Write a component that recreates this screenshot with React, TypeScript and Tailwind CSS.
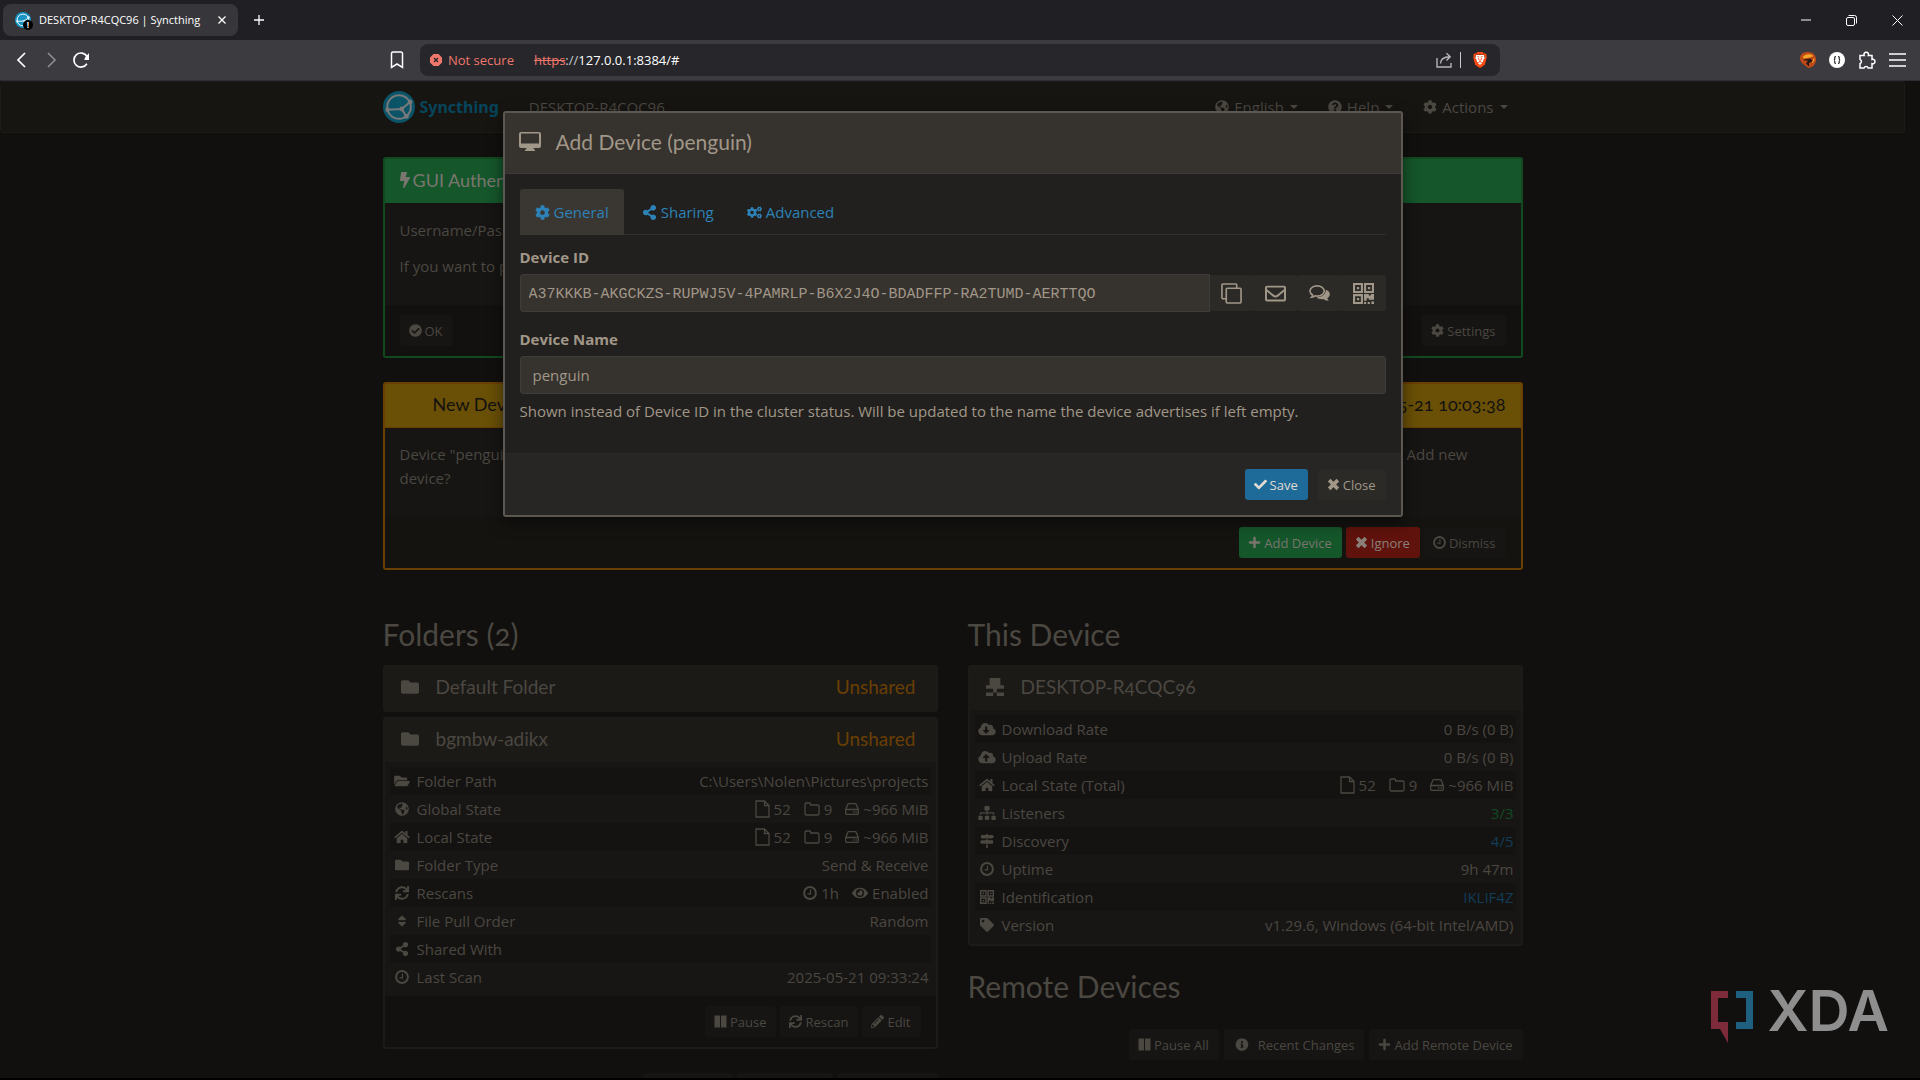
import React from "react";
import clsx from "clsx";
import {
  FaBolt,
  FaCheck,
  FaCheckCircle,
  FaCloudDownloadAlt,
  FaCloudUploadAlt,
  FaCog,
  FaCogs,
  FaEye,
  FaFolder,
  FaFolderOpen,
  FaGlobeAmericas,
  FaHome,
  FaInfoCircle,
  FaMapSigns,
  FaPencilAlt,
  FaPlus,
  FaQuestionCircle,
  FaRegEnvelope,
  FaShareAlt,
  FaSitemap,
  FaSort,
  FaSync,
  FaTag,
} from "react-icons/fa";
import { SiBrave } from "react-icons/si";

type IconType = React.ComponentType<{ className?: string }>;

/* ---------- icons ---------- */

const SyncthingMark = ({ className }: { className?: string }) => (
  <svg viewBox="0 0 32 32" className={className} aria-hidden="true">
    <circle cx="16" cy="16" r="16" fill="currentColor" />
    <g fill="none" stroke="var(--mark)" strokeWidth="2">
      <circle cx="16" cy="16" r="11.8" />
      <path d="M4.5 18.8 18.8 18M18.8 18 27 11M18.8 18 23.3 25.5" />
    </g>
    <g fill="var(--mark)">
      <circle cx="4.6" cy="18.8" r="2.2" />
      <circle cx="18.8" cy="18" r="2.4" />
      <circle cx="27" cy="11" r="2.4" />
      <circle cx="23.4" cy="25.4" r="2.4" />
    </g>
  </svg>
);

const DesktopIcon = ({ className }: { className?: string }) => (
  <svg viewBox="0 0 22 20" className={className} aria-hidden="true">
    <path
      fill="currentColor"
      fillRule="evenodd"
      d="M2 0h18a2 2 0 0 1 2 2v12a2 2 0 0 1-2 2h-5.500l.500 1.500h1V19H6v-1.500h1l.500-1.500H2a2 2 0 0 1-2-2V2a2 2 0 0 1 2-2Zm0 1.500v10h18v-10Z"
    />
  </svg>
);

const CloneIcon = ({ className }: { className?: string }) => (
  <svg viewBox="0 0 22 22" className={className} aria-hidden="true">
    <g fill="none" stroke="currentColor" strokeWidth="1.700">
      <rect x="5.500" y="5.500" width="15.500" height="15.500" rx="1" />
      <path d="M5.500 16.500H2a1 1 0 0 1-1-1V2a1 1 0 0 1 1-1h13.500a1 1 0 0 1 1 1v3.500" />
    </g>
  </svg>
);

const CommentsIcon = ({ className }: { className?: string }) => (
  <svg viewBox="0 0 22 18" className={className} aria-hidden="true">
    <path
      d="M8.500 1C4.400 1 1 3.400 1 6.400c0 1.700 1.100 3.200 2.800 4.200-.1.900-.5 1.600-1.100 2.300 1.400-.2 2.600-.7 3.600-1.500.7.200 1.400.3 2.200.3 4.100 0 7.500-2.400 7.500-5.300S12.600 1 8.500 1Z"
      fill="none"
      stroke="currentColor"
      strokeWidth="1.700"
    />
    <path
      d="M17.600 5.200c.1 5-4.600 8-9.700 8 1.700 1.400 4.600 2.200 7.300 1.600 1.200 1 2.900 1.800 4.900 1.800.4-.1.500-.5.200-.8-.7-.6-1-1.300-1.200-2 1.700-1 2.700-2.400 2.700-4.100 0-1.900-1.600-3.500-4.200-4.500Z"
      fill="currentColor"
    />
  </svg>
);

const QrIcon = ({ className }: { className?: string }) => (
  <svg viewBox="0 0 20 20" className={className} aria-hidden="true">
    <path
      fill="none"
      stroke="currentColor"
      strokeWidth="2"
      d="M1 1h7.500v7.500H1zM11.500 1H19v7.500h-7.500zM1 11.500h7.500V19H1z"
    />
    <path
      fill="currentColor"
      d="M3.700 3.700h2.200v2.200H3.700zM14.200 3.700h2.200v2.200h-2.200zM3.700 14.200h2.200v2.200H3.700zM10.500 10.500h4.500v1.500h2v-1.500h3V16h-5v-1.500h-2v2.500h-2.500zM10.500 18H12.500v2h-2zM14 18h2v2h-2zM17.500 17.500H20V20h-2.500z"
    />
  </svg>
);

const ClockIcon = ({ className }: { className?: string }) => (
  <svg viewBox="0 0 14 14" className={className} aria-hidden="true">
    <circle cx="7" cy="7" r="5.900" fill="none" stroke="currentColor" strokeWidth="2" />
    <path d="M7.500 3.500v4.300h-3" fill="none" stroke="currentColor" strokeWidth="1.200" />
  </svg>
);

const FileIcon = ({ className }: { className?: string }) => (
  <svg viewBox="0 0 15 18" className={className} aria-hidden="true">
    <path
      d="M1 1h8.500L14 5.500V17H1ZM9.500 1v4.500H14"
      fill="none"
      stroke="currentColor"
      strokeWidth="1.300"
    />
  </svg>
);

const FolderOutlineIcon = ({ className }: { className?: string }) => (
  <svg viewBox="0 0 16 14" className={className} aria-hidden="true">
    <path
      d="M1 2.200A1.200 1.200 0 0 1 2.200 1h3.300a1.200 1.200 0 0 1 1.200 1.200V3h7.100A1.200 1.200 0 0 1 15 4.200v7.600a1.200 1.200 0 0 1-1.200 1.200H2.200A1.200 1.200 0 0 1 1 11.800Z"
      fill="none"
      stroke="currentColor"
      strokeWidth="1.300"
    />
  </svg>
);

const DiskIcon = ({ className }: { className?: string }) => (
  <svg viewBox="0 0 14 12" className={className} aria-hidden="true">
    <path
      d="M.700 6.500 2.800 1.300Q3 .700 3.700.700h6.600q.7 0 .9.600L13.300 6.500v4q0 .8-.8.800h-11q-.8 0-.8-.8ZM.700 6.500h12.600"
      fill="none"
      stroke="currentColor"
      strokeWidth="1.300"
    />
    <path d="M8 8.300h1.400v1.400H8zM10.400 8.300h1.400v1.400h-1.400z" fill="currentColor" />
  </svg>
);

const TimesIcon = ({ className }: { className?: string }) => (
  <svg viewBox="0 0 12 12" className={className} aria-hidden="true">
    <path d="m2 2 8 8M10 2l-8 8" stroke="currentColor" strokeWidth="3.400" />
  </svg>
);

const PauseIcon = ({ className }: { className?: string }) => (
  <svg viewBox="0 0 14 14" className={className} aria-hidden="true">
    <path d="M.500.500h6v13h-6zM7.500.500h6v13h-6z" fill="currentColor" />
  </svg>
);

// the 5x5 generated avatar of the local device
const Identicon = ({ className }: { className?: string }) => (
  <svg viewBox="0 0 5 5" className={className} aria-hidden="true">
    <path
      fill="currentColor"
      d="M1 0h3v2h1v1H3v1h2v1H3V4H2v1H0V4h2V3H0V2h1z"
    />
  </svg>
);

const Caret = () => (
  <span className="ml-1.5 inline-block border-x-4 border-t-4 border-x-transparent border-t-current" />
);

/* ---------- browser window ---------- */

const BrowserChrome = () => (
  <header className="shrink-0 font-['Open_Sans',sans-serif] text-white">
    <div className="flex h-10 items-center bg-[#1f1f24] pl-[3px]">
      <div className="flex h-8 w-[235px] items-center rounded-lg bg-[#36363b] pr-2.5 pl-3 text-[11px]">
        <span className="relative mr-2 size-4 shrink-0 text-[#1794c4] [--mark:#e8f6fb]">
          <SyncthingMark className="size-4" />
          <span className="absolute -right-0.5 -bottom-0.5 flex size-[10px] items-center justify-center rounded-full bg-black text-[8px] leading-none font-bold text-white">
            !
          </span>
        </span>
        <span className="flex-1 whitespace-nowrap">DESKTOP-R4CQC96 | Syncthing</span>
        <button aria-label="Close tab" className="p-0.5">
          <svg viewBox="0 0 8 8" className="size-2">
            <path d="m.500.500 7 7M7.500.500l-7 7" stroke="currentColor" strokeWidth="1.300" />
          </svg>
        </button>
      </div>
      <button aria-label="New tab" className="ml-3.5 p-0.5">
        <svg viewBox="0 0 10 10" className="size-2.5">
          <path d="M5 0v10M0 5h10" stroke="currentColor" strokeWidth="1.300" />
        </svg>
      </button>
      <div className="ml-auto flex items-center gap-[35px] pr-[17px]">
        <button aria-label="Minimize">
          <svg viewBox="0 0 10 10" className="size-2.5">
            <path d="M0 5h10" stroke="currentColor" />
          </svg>
        </button>
        <button aria-label="Restore">
          <svg viewBox="0 0 11 11" className="size-[11px]" fill="none" stroke="currentColor">
            <rect x=".500" y="2.500" width="8" height="8" rx="1.500" />
            <path d="M2.500.500h6a2 2 0 0 1 2 2v6" />
          </svg>
        </button>
        <button aria-label="Close">
          <svg viewBox="0 0 11 11" className="size-[11px]">
            <path d="m.500.500 10 10M10.500.500l-10 10" stroke="currentColor" />
          </svg>
        </button>
      </div>
    </div>
    <div className="flex h-[41px] items-center border-b border-[#2d2d33] bg-[#3b3b40] pl-4">
      <button aria-label="Back" className="w-7">
        <svg viewBox="0 0 10 16" className="h-4 w-2.5" fill="none" stroke="currentColor" strokeWidth="1.700">
          <path d="M9 1 2 8l7 7" />
        </svg>
      </button>
      <button aria-label="Forward" className="w-7 pl-[3px] text-[#8a8a90]">
        <svg viewBox="0 0 10 16" className="h-4 w-2.5" fill="none" stroke="currentColor" strokeWidth="1.700">
          <path d="m1 1 7 7-7 7" />
        </svg>
      </button>
      <button aria-label="Reload">
        <svg viewBox="0 0 18 18" className="size-[18px]">
          <path
            d="M14.900 12.700A7 7 0 1 1 15 5.500"
            fill="none"
            stroke="currentColor"
            strokeWidth="1.700"
          />
          <path d="M17 2v7h-4.500c0-2.500 1.500-3.500 4.500-7Z" fill="currentColor" />
        </svg>
      </button>
      <button aria-label="Bookmark" className="ml-auto">
        <svg viewBox="0 0 14 18" className="h-[18px] w-3.5" fill="none" stroke="currentColor" strokeWidth="1.500">
          <path d="M1.500 2.500A1.500 1.500 0 0 1 3 1h8a1.500 1.500 0 0 1 1.500 1.500V16.500L7 13l-5.500 3.500Z" />
        </svg>
      </button>
      <div className="ml-4 flex h-8 w-[1080px] items-center rounded-lg bg-[#26262b] pr-3 pl-2.5 text-[13px]">
        <svg viewBox="0 0 12 12" className="mr-1.5 size-3">
          <path d="M3.500 0h5L12 3.500v5L8.500 12h-5L0 8.500v-5Z" fill="#f0776c" />
          <path d="m4 4 4 4M8 4 4 8" stroke="#26262b" strokeWidth="1.300" />
        </svg>
        <span className="mr-5 text-[#f0776c]">Not secure</span>
        <label htmlFor="address" className="whitespace-nowrap">
          <span className="text-[#f0776c] line-through">https</span>
          <span className="text-[#c9c9ce]">://</span>
        </label>
        <input
          id="address"
          readOnly
          value="127.0.0.1:8384/#"
          className="min-w-0 flex-1 bg-transparent text-white outline-none"
        />
        <button aria-label="Share" className="text-[#b5b5ba]">
          <svg viewBox="0 0 16 16" className="size-4" fill="none" stroke="currentColor" strokeWidth="1.400">
            <path d="M1 6v9h14v-4M4.500 11.500C4.500 7 7 5 14 4.800M10.500 1.200 14.200 4.800 10.500 8.500" />
          </svg>
        </button>
        <span className="mx-2 h-4 w-px bg-[#c9c9ce]" />
        <button aria-label="Brave Shields" className="relative ml-[3px] text-[#ff4a10]">
          <svg viewBox="0 0 16 18" className="absolute inset-0 h-[18px] w-4">
            <path d="M4 4h8l1 4-5 8-5-8z" fill="#fff" />
          </svg>
          <SiBrave className="relative h-[18px] w-4" />
        </button>
      </div>
      <div className="ml-auto flex items-center gap-[13px] pr-3.5">
        <svg viewBox="0 0 16 16" className="size-4">
          <path d="M8 0c5 0 8 3 8 7.500S12.500 16 8 16C5.500 13.500 0 11 0 6.500S3.500 0 8 0Z" fill="#c04a16" />
          <path d="M3 4.500C6 1.500 11 1.500 13.500 4L10 5.500 3.500 6.500Z" fill="#f4a62a" />
          <path d="M3.500 7.500 11 6.500l1.500 3L9 11v3.500L6 11.500l2-3H4Z" fill="#25161c" />
          <path d="M12 10.500c1.500-1 2-2.500 2-4" fill="none" stroke="#f4a62a" strokeWidth="1.200" />
        </svg>
        <svg viewBox="0 0 16 16" className="size-4">
          <circle cx="8" cy="8" r="8" fill="#fff" />
          <path
            d="M7 4.500c-1.500 0-1.200 1-1.200 2S5.500 8 4.800 8c.7 0 1 .5 1 1.500s-.3 2 1.200 2M9 4.500c1.500 0 1.200 1 1.200 2s.3 1.500 1 1.500c-.7 0-1 .5-1 1.500s.3 2-1.200 2"
            fill="none"
            stroke="#222"
            strokeWidth="1.200"
          />
        </svg>
        <button aria-label="Extensions">
          <svg viewBox="0 0 18 18" className="size-[18px]" fill="none" stroke="currentColor" strokeWidth="1.500">
            <path d="M2 4.500h4.200a2.300 2.300 0 1 1 4.100 0H14v4a2.200 2.200 0 1 1 0 4.100v4.400h-3.800a2.200 2.200 0 0 0-4.200 0H2v-4.400a2.200 2.200 0 0 0 0-4.100Z" />
          </svg>
        </button>
        <button aria-label="Menu">
          <svg viewBox="0 0 17 14" className="h-3.5 w-[17px]">
            <path d="M0 1h17M0 7h17M0 13h17" stroke="currentColor" strokeWidth="1.500" />
          </svg>
        </button>
      </div>
    </div>
  </header>
);

/* ---------- page ---------- */

const Button = ({
  icon: Icon,
  tone = "default",
  wideIcon,
  children,
}: {
  icon: IconType;
  tone?: "default" | "success" | "danger" | "primary" | "modal";
  wideIcon?: boolean;
  children: React.ReactNode;
}) => (
  <button
    className={clsx(
      "flex h-[31px] items-center gap-[3px] rounded-[3px] pr-2.5 pl-[9px] text-[13px] whitespace-nowrap",
      tone === "default" && "bg-[#161513] text-[#4b4741]",
      tone === "success" && "bg-[#15562b] text-[#79756e]",
      tone === "danger" && "bg-[#60120c] text-[#8a8078]",
      tone === "primary" && "bg-[#1e6a98] text-[#e0dbd3]",
      tone === "modal" && "bg-[#2b2a27] text-[#a19788]"
    )}
  >
    <Icon className={clsx("h-[13px]", wideIcon ? "mr-1 w-[18px]" : "w-[13px]")} />
    {children}
  </button>
);

const NavItem = ({ icon: Icon, children }: { icon: IconType; children: React.ReactNode }) => (
  <a href="#" className="flex items-center">
    <Icon className="mr-[5px] size-3.5" />
    {children}
    <Caret />
  </a>
);

const Navbar = () => (
  <nav className="rounded-[3px] border border-[#1c1b18] bg-[#161512]">
    <div className="mx-auto flex h-[50px] max-w-[1170px] items-center px-[15px] text-[#4b4741]">
      <a href="#" className="flex items-center gap-[5px] text-[#0b5468] [--mark:#77797a]">
        <SyncthingMark className="size-8" />
        <span className="font-['Noto_Sans',sans-serif] text-base font-bold text-[#07455c]">
          Syncthing
        </span>
      </a>
      <span className="ml-[30px]">DESKTOP-R4CQC96</span>
      <div className="ml-auto flex gap-[30px] pr-[15px]">
        <NavItem icon={FaGlobeAmericas}>English</NavItem>
        <NavItem icon={FaQuestionCircle}>Help</NavItem>
        <NavItem icon={FaCog}>Actions</NavItem>
      </div>
    </div>
  </nav>
);

const heading = "font-['Lato',sans-serif] [font-variant-numeric:oldstyle-nums]";

const Notices = () => (
  <>
    <section className="mt-6 rounded-[3px] border-2 border-[#124a20]">
      <h3 className={clsx(heading, "flex h-11 items-center bg-[#15562b] px-3.5 pb-0.5 text-lg text-[#7a766f]")}>
        <FaBolt className="mr-0.5 h-4 w-3" />
        GUI Authentication: Set User and Password
      </h3>
      <div className="h-[102px] bg-[#161513] px-[15px] pt-[15px] text-[#4b4741]">
        <p className="mb-3">
          Username/Password has not been set for the GUI authentication. Please consider setting it up.
        </p>
        <p>If you want to prevent other processes on this computer from accessing the GUI, set a password.</p>
      </div>
      <footer className="flex justify-between bg-[#12110f] px-[15px] py-2.5">
        <Button icon={FaCheckCircle}>OK</Button>
        <Button icon={FaCog}>Settings</Button>
      </footer>
    </section>

    <section className="mt-6 rounded-[3px] border-2 border-[#6a3f03]">
      <h3
        className={clsx(
          heading,
          "flex h-11 items-center justify-between border-b border-[#6a3f03] bg-[#6a5006] pr-[15px] pb-[3px] pl-12 text-lg text-[#12110f]"
        )}
      >
        <span>New Device</span>
        <time>2025-05-21 10:03:38</time>
      </h3>
      <div className="h-[89px] bg-[#161513] px-[15px] pt-3.5 text-[#4b4741]">
        <p>
          Device "penguin" (A37KKKB-AKGCKZS-RUPWJ5V-4PAMRLP-B6X2J4O-BDADFFP-RA2TUMD-AERTTQO, at 192.168.100.109:22000) wants to connect. Add new device?
        </p>
      </div>
      <footer className="flex justify-end gap-1 bg-[#141310] px-[15px] py-2.5">
        <Button icon={FaPlus} tone="success">Add Device</Button>
        <Button icon={TimesIcon} tone="danger">Ignore</Button>
        <Button icon={ClockIcon}>Dismiss</Button>
      </footer>
    </section>
  </>
);

const StateCounts = () => (
  <span className="flex items-center justify-end gap-1">
    <FileIcon className="h-[18px] w-[15px]" />
    52
    <FolderOutlineIcon className="ml-[9px] h-3.5 w-4" />
    9
    <DiskIcon className="ml-[9px] h-3 w-3.5" />
    ~966 MiB
  </span>
);

type Row = [IconType, string, React.ReactNode];

const folderRows: Row[] = [
  [FaFolderOpen, "Folder Path", "C:\\Users\\Nolen\\Pictures\\projects"],
  [FaGlobeAmericas, "Global State", <StateCounts />],
  [FaHome, "Local State", <StateCounts />],
  [FaFolder, "Folder Type", "Send & Receive"],
  [
    FaSync,
    "Rescans",
    <span className="flex items-center justify-end gap-1">
      <ClockIcon className="size-3.5" />
      1h
      <FaEye className="ml-[9px] size-4" />
      Enabled
    </span>,
  ],
  [FaSort, "File Pull Order", "Random"],
  [FaShareAlt, "Shared With", ""],
  [ClockIcon, "Last Scan", "2025-05-21 09:33:24"],
];

const deviceRows: Row[] = [
  [FaCloudDownloadAlt, "Download Rate", "0 B/s (0 B)"],
  [FaCloudUploadAlt, "Upload Rate", "0 B/s (0 B)"],
  [FaHome, "Local State (Total)", <StateCounts />],
  [FaSitemap, "Listeners", <a href="#" className="text-[#124a20]">3/3</a>],
  [FaMapSigns, "Discovery", <a href="#" className="text-[#123c58]">4/5</a>],
  [ClockIcon, "Uptime", "9h 47m"],
  [QrIcon, "Identification", <a href="#" className="text-[#123c58]">IKLIF4Z</a>],
  [FaTag, "Version", "v1.29.6, Windows (64-bit Intel/AMD)"],
];

const InfoTable = ({ rows }: { rows: Row[] }) => (
  <div className="bg-[#171614] p-[5px]">
    <table className="w-full text-[#4b4741]">
      <tbody>
        {rows.map(([Icon, label, value]) => (
          <tr key={label} className="h-7 odd:bg-[#141311]">
            <th scope="row" className="px-[3px] text-left font-normal whitespace-nowrap">
              <span className="flex items-center gap-1.5">
                <Icon className="h-3.5 w-[18px]" />
                {label}
              </span>
            </th>
            <td className="px-0.5 text-right whitespace-nowrap">{value}</td>
          </tr>
        ))}
      </tbody>
    </table>
  </div>
);

const PanelHeader = ({
  icon: Icon,
  title,
  status,
}: {
  icon: IconType;
  title: string;
  status?: string;
}) => (
  <button
    className={clsx(heading, "flex h-[43px] w-full items-center bg-[#1b1a17] px-4 pb-[3px] text-[19px] text-[#4b4741]")}
  >
    <Icon className="mr-[17px] size-[18px]" />
    <span>{title}</span>
    {status && <span className="ml-auto pr-1 text-[#6a3f03]">{status}</span>}
  </button>
);

const panel = "overflow-hidden rounded-[3px] border-2 border-[#1c1b18]";
const title = "text-3xl leading-9 text-[#4b4741]";

const Folders = () => (
  <section>
    <h2 className={clsx(heading, title)}>Folders (2)</h2>
    <div className={clsx(panel, "mt-[13px]")}>
      <PanelHeader icon={FaFolder} title="Default Folder" status="Unshared" />
    </div>
    <div className={clsx(panel, "mt-[5px]")}>
      <PanelHeader icon={FaFolder} title="bgmbw-adikx" status="Unshared" />
      <InfoTable rows={folderRows} />
      <footer className="flex justify-end gap-1 bg-[#12110f] px-[15px] py-2.5">
        <Button icon={PauseIcon}>Pause</Button>
        <Button icon={FaSync}>Rescan</Button>
        <Button icon={FaPencilAlt}>Edit</Button>
      </footer>
    </div>
    <div className="mt-6 flex justify-end gap-1">
      <Button icon={PauseIcon}>Pause All</Button>
      <Button icon={FaSync}>Rescan All</Button>
      <Button icon={FaPlus}>Add Folder</Button>
    </div>
  </section>
);

const Devices = () => (
  <section>
    <h2 className={clsx(heading, title)}>This Device</h2>
    <div className={clsx(panel, "mt-[13px]")}>
      <PanelHeader icon={Identicon} title="DESKTOP-R4CQC96" />
      <InfoTable rows={deviceRows} />
    </div>
    <h2 className={clsx(heading, title, "mt-[22px]")}>Remote Devices</h2>
    <div className="mt-[25px] flex justify-end gap-[5px]">
      <Button icon={PauseIcon}>Pause All</Button>
      <Button icon={FaInfoCircle} wideIcon>Recent Changes</Button>
      <Button icon={FaPlus}>Add Remote Device</Button>
    </div>
  </section>
);

/* ---------- modal ---------- */

const tabs: { icon: IconType; label: string; active?: boolean }[] = [
  { icon: FaCog, label: "General", active: true },
  { icon: FaShareAlt, label: "Sharing" },
  { icon: FaCogs, label: "Advanced" },
];

const idActions: { icon: IconType; label: string }[] = [
  { icon: CloneIcon, label: "Copy" },
  { icon: FaRegEnvelope, label: "Share by Email" },
  { icon: CommentsIcon, label: "Share by SMS" },
  { icon: QrIcon, label: "Show QR" },
];

const AddDeviceModal = () => (
  <div className="absolute inset-0 flex items-start justify-center pt-[30px] pr-[15px]">
    <div
      role="dialog"
      aria-labelledby="modal-title"
      className="w-[900px] rounded-[3px] border-2 border-[#5c5751] bg-[#21201e] text-[#a19788] shadow-[0_5px_15px_rgba(0,0,0,0.5)]"
    >
      <div className="flex h-[61px] items-center border-b border-[#3c3a38] bg-[#36322e] px-3.5 pb-0.5">
        <DesktopIcon className="h-5 w-[22px]" />
        <h4 id="modal-title" className={clsx(heading, "ml-[15px] text-[21px]")}>
          Add Device (penguin)
        </h4>
      </div>
      <form className="px-[15px] pt-[15px] pb-[30px]" onSubmit={(e) => e.preventDefault()}>
        <div role="tablist" className="flex gap-[3px] border-b border-[#302f2c] text-[#2d82b7]">
          {tabs.map(({ icon: Icon, label, active }) => (
            <button
              key={label}
              type="button"
              role="tab"
              aria-selected={!!active}
              className={clsx(
                "-mb-px flex h-[46px] items-center gap-1 rounded-t-[3px] px-[15px]",
                active && "bg-[#3a3632]"
              )}
            >
              <Icon className="h-[15px] w-auto" />
              {label}
            </button>
          ))}
        </div>
        <label htmlFor="deviceID" className="mt-2.5 block h-[29px] font-bold">
          Device ID
        </label>
        <div className="flex items-center">
          <input
            id="deviceID"
            defaultValue="A37KKKB-AKGCKZS-RUPWJ5V-4PAMRLP-B6X2J4O-BDADFFP-RA2TUMD-AERTTQO"
            className="h-[38px] min-w-0 flex-1 rounded-l-[3px] border border-[#3f3d3b] bg-[#36322e] px-2 pt-0.5 font-['Liberation_Mono',monospace] text-[15px] outline-none"
          />
          {idActions.map(({ icon: Icon, label }) => (
            <button
              key={label}
              type="button"
              aria-label={label}
              className="flex h-9 w-11 items-center justify-center rounded-r-[3px] bg-[#2b2a27]"
            >
              <Icon className="size-[21px]" />
            </button>
          ))}
        </div>
        <label htmlFor="deviceName" className="mt-[15px] block h-[29px] font-bold">
          Device Name
        </label>
        <input
          id="deviceName"
          defaultValue="penguin"
          className="block h-[38px] w-full rounded-[3px] border border-[#3f3d3b] bg-[#36322e] px-3 outline-none"
        />
        <p className="mt-[5px]">
          Shown instead of Device ID in the cluster status. Will be updated to the name the device advertises if left empty.
        </p>
      </form>
      <div className="flex justify-end gap-2.5 border-t border-[#2b2a28] bg-[#272624] px-[15px] py-[15px]">
        <Button icon={FaCheck} tone="primary">Save</Button>
        <Button icon={TimesIcon} tone="modal">Close</Button>
      </div>
    </div>
  </div>
);

const Watermark = () => (
  <div className="absolute right-[31px] bottom-[35px] flex items-start gap-[15px]">
    <svg viewBox="0 0 42 52" className="h-[52px] w-[42px]" aria-hidden="true">
      <path d="M0 0h17v7H7v24h10v21L9 38H0z" fill="#7d2a3b" />
      <path d="M25 0h17v38H25v-7h10V7H25z" fill="#1f5f80" />
    </svg>
    <span className="font-['Inter',sans-serif] text-[57px] leading-10 font-semibold text-[#8e8e8e]">
      XDA
    </span>
  </div>
);

export default function App() {
  return (
    <div className="flex h-screen flex-col bg-[#11100e] font-['Open_Sans',sans-serif] text-[15px] leading-6">
      <BrowserChrome />
      <main className="relative flex-1 overflow-hidden border-b-2 border-black">
        <div className="pr-[15px]">
          <Navbar />
          <div className="mx-auto max-w-[1170px] px-[15px]">
            <Notices />
            <div className="mt-[46px] grid grid-cols-2 gap-[30px]">
              <Folders />
              <Devices />
            </div>
          </div>
        </div>
        <AddDeviceModal />
        <Watermark />
      </main>
    </div>
  );
}
